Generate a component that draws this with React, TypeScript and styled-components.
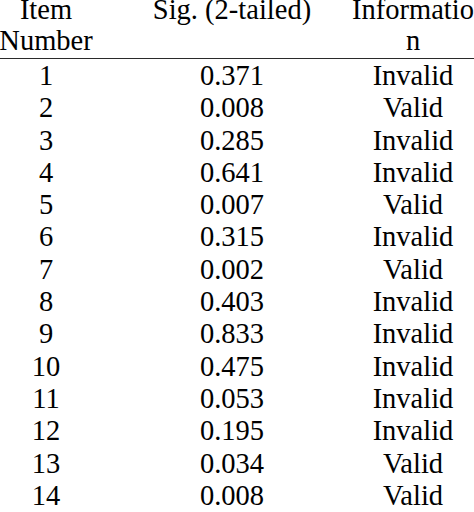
import styled, { createGlobalStyle } from "styled-components";

const GlobalStyle = createGlobalStyle`
  html, body {
    margin: 0;
    padding: 0;
    background: #fff;
    overflow: hidden;
  }
`;

const rows: [string, string, string][] = [
  ["1", "0.371", "Invalid"],
  ["2", "0.008", "Valid"],
  ["3", "0.285", "Invalid"],
  ["4", "0.641", "Invalid"],
  ["5", "0.007", "Valid"],
  ["6", "0.315", "Invalid"],
  ["7", "0.002", "Valid"],
  ["8", "0.403", "Invalid"],
  ["9", "0.833", "Invalid"],
  ["10", "0.475", "Invalid"],
  ["11", "0.053", "Invalid"],
  ["12", "0.195", "Invalid"],
  ["13", "0.034", "Valid"],
  ["14", "0.008", "Valid"],
];

const Table = styled.div`
  width: 474px;
  height: 512px;
  overflow: hidden;
  font-family: "Liberation Serif", "Times New Roman", serif;
  font-size: 28.5px;
  color: #000;
`;

const Grid = styled.div<{ $lineHeight: number }>`
  display: grid;
  grid-template-columns: 92px 280px 82px;
  line-height: ${(props) => props.$lineHeight}px;
`;

const HeadGrid = styled(Grid)`
  margin-top: -4.8px;
  padding-bottom: 1.6px;
  border-bottom: 1.5px solid #2a2a2a;
`;

const BodyGrid = styled(Grid)`
  padding-top: 1.2px;
`;

const Cell = styled.div`
  display: flex;
  flex-direction: column;
  align-items: center;
  white-space: nowrap;
`;

export default function App() {
  return (
    <Table>
      <GlobalStyle />
      <HeadGrid $lineHeight={30.5}>
        <Cell>
          <span>Item</span>
          <span>Number</span>
        </Cell>
        <Cell>
          <span>Sig. (2-tailed)</span>
        </Cell>
        <Cell>
          <span>Informatio</span>
          <span>n</span>
        </Cell>
      </HeadGrid>
      <BodyGrid $lineHeight={32.3}>
        {rows.map((row) =>
          row.map((value, idx) => <Cell key={row[0] + "-" + idx}>{value}</Cell>)
        )}
      </BodyGrid>
    </Table>
  );
}
